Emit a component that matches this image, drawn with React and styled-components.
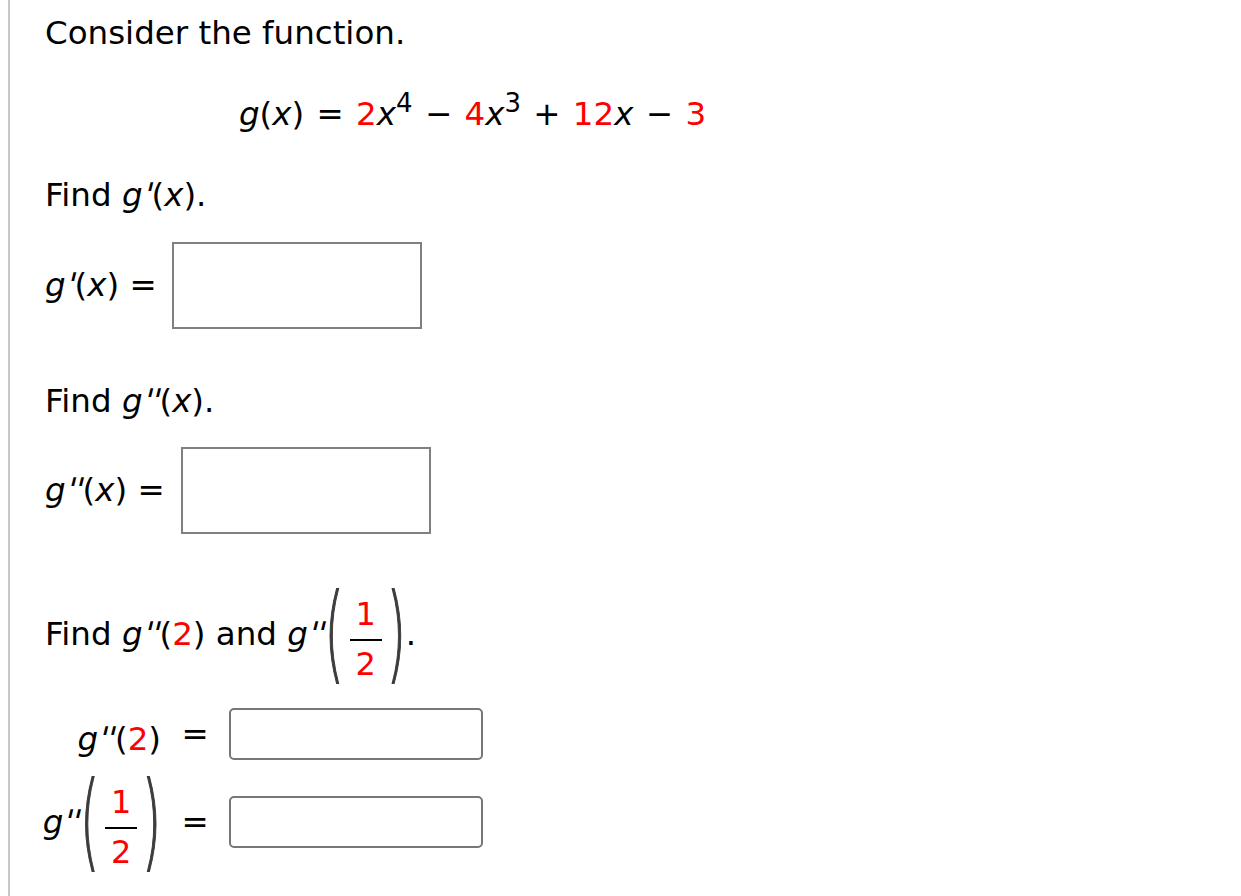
import React from 'react';
import styled, { createGlobalStyle } from 'styled-components';

const GlobalStyle = createGlobalStyle`
  html, body {
    margin: 0;
    padding: 0;
    background: #fff;
  }
  body {
    font-family: "DejaVu Sans", Verdana, sans-serif;
    color: #000;
  }
`;

const Page = styled.div`
  margin-left: 8px;
  border-left: 2px solid #c8c8c8;
  min-height: 896px;
  padding: 15px 0 0 35px;
  box-sizing: border-box;
`;

const Content = styled.div`
  width: 855px;
  font-size: 32.5px;
  line-height: 37px;
`;

const Para = styled.p`
  margin: ${(p) => p.$top || 0}px 0 0;
`;

const Display = styled.div`
  margin-top: 44px;
  text-align: center;
`;

const I = styled.i`
  font-style: italic;
`;

const Prime = styled.i`
  display: inline-block;
  font-style: italic;
  margin-left: 1px;
  letter-spacing: -1px;
  transform: skewX(-14deg);
`;

const Red = styled.span`
  color: #ff0000;
`;

const Op = styled.span`
  margin: 0 2px;
`;

const Sup = styled.sup`
  font-size: 26px;
  vertical-align: 13px;
  line-height: 0;
`;

const AnswerRow = styled.div`
  display: flex;
  align-items: center;
  margin-top: ${(p) => p.$top}px;
`;

const Label = styled.span`
  white-space: nowrap;
  width: ${(p) => p.$w}px;
`;

const Input = styled.input`
  box-sizing: border-box;
  width: ${(p) => p.$w}px;
  height: ${(p) => p.$h}px;
  border: 2px solid ${(p) => (p.$round ? '#777' : '#808080')};
  border-radius: ${(p) => (p.$round ? 5 : 0)}px;
  padding: 0 8px;
  font: inherit;
  background: #fff;
  outline: none;
`;

const Paren = styled.span`
  display: inline-block;
  font-size: 48px;
  font-weight: 200;
  line-height: 48px;
  vertical-align: -5px;
  color: #3c3c3c;
  -webkit-text-stroke: 0.9px #3c3c3c;
  transform: scaleY(2.2);
  transform-origin: 50% 25.5px;
`;

const Frac = styled.span`
  display: inline-flex;
  flex-direction: column;
  vertical-align: 20px;
  text-align: center;
  font-size: 32px;
  line-height: 32px;
  margin: 0 5px 0 6px;
`;

const Num = styled.span`
  padding: 0 6px 9px;
  color: #ff0000;
`;

const Bar = styled.span`
  height: 2px;
  background: #000;
`;

const Den = styled.span`
  padding-top: 7px;
  color: #ff0000;
`;

const EvalGrid = styled.div`
  display: grid;
  grid-template-columns: 116px 68px 254px;
  grid-template-rows: 52px 92px;
  row-gap: 16px;
  align-items: center;
  margin-top: 28px;
`;

const EvalLabel = styled.div`
  justify-self: end;
  white-space: nowrap;
  margin-top: ${(p) => p.$shift || 0}px;
`;

const Eq = styled.div`
  text-align: center;
`;

const G1 = () => (
  <>
    <I>g</I>
    <Prime>'</Prime>
  </>
);

const G2 = () => (
  <>
    <I>g</I>
    <Prime>''</Prime>
  </>
);

const Half = () => (
  <>
    <Paren>(</Paren>
    <Frac>
      <Num>1</Num>
      <Bar />
      <Den>2</Den>
    </Frac>
    <Paren>)</Paren>
  </>
);

export default function App() {
  return (
    <>
      <GlobalStyle />
      <Page>
        <Content>
          <Para>Consider the function.</Para>

          <Display>
            <I>g</I>(<I>x</I>) <Op>=</Op> <Red>2</Red>
            <I>x</I>
            <Sup>4</Sup> <Op>−</Op> <Red>4</Red>
            <I>x</I>
            <Sup>3</Sup> <Op>+</Op> <Red>12</Red>
            <I>x</I> <Op>−</Op> <Red>3</Red>
          </Display>

          <Para $top={44}>
            Find <G1 />(<I>x</I>).
          </Para>
          <AnswerRow $top={28}>
            <Label $w={127}>
              <G1 />(<I>x</I>) =
            </Label>
            <Input $w={250} $h={87} />
          </AnswerRow>

          <Para $top={54}>
            Find <G2 />(<I>x</I>).
          </Para>
          <AnswerRow $top={27}>
            <Label $w={136}>
              <G2 />(<I>x</I>) =
            </Label>
            <Input $w={250} $h={87} />
          </AnswerRow>

          <Para $top={64}>
            Find <G2 />(<Red>2</Red>) and <G2 />
            <Half />.
          </Para>

          <EvalGrid>
            <EvalLabel $shift={10}>
              <G2 />(<Red>2</Red>)
            </EvalLabel>
            <Eq>=</Eq>
            <Input $w={254} $h={52} $round />

            <EvalLabel $shift={9}>
              <G2 />
              <Half />
            </EvalLabel>
            <Eq>=</Eq>
            <Input $w={254} $h={52} $round />
          </EvalGrid>
        </Content>
      </Page>
    </>
  );
}
